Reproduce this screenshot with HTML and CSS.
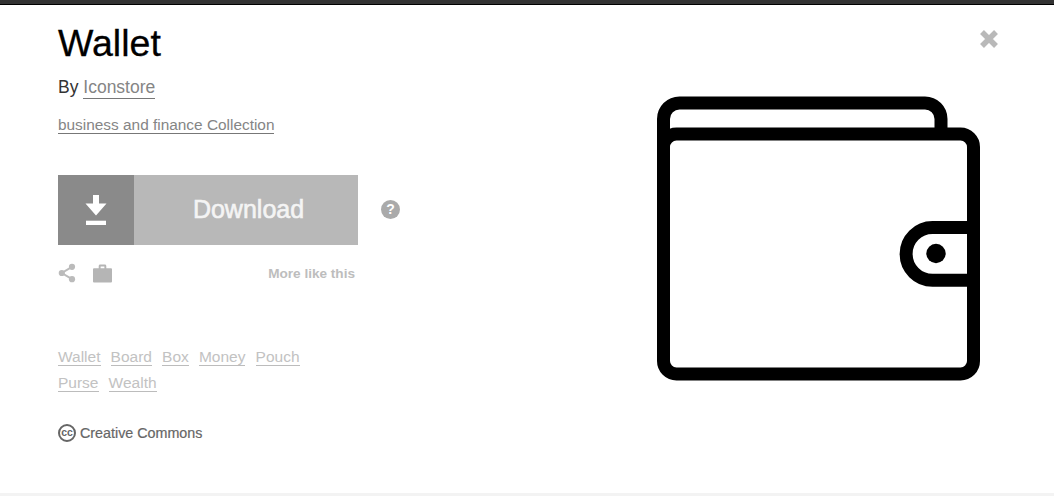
FILE: index.html
```html
<!DOCTYPE html>
<html lang="en">
<head>
  <meta charset="UTF-8" />
  <meta name="viewport" content="width=device-width, initial-scale=1.0" />
  <title>Wallet</title>
  <link rel="stylesheet" href="styles.css">
</head>
<body>
  <div class="detail">
    <a class="close" href="#" aria-label="Close">
      <svg width="20" height="20" viewBox="0 0 20 20"><path d="M3 3 17 17M17 3 3 17" /></svg>
    </a>

    <div class="info">
      <h1>Wallet</h1>
      <p class="author">By <a href="#">Iconstore</a></p>
      <p class="collection"><a href="#">business and finance Collection</a></p>

      <div class="download-row">
        <a class="download" href="#">
          <span class="download-icon">
            <svg width="22" height="31" viewBox="0 0 22 31">
              <path d="M8 0h6v8.500h7.500L11 20.500.5 8.500H8z" />
              <rect x="1" y="25.700" width="20" height="4.300" />
            </svg>
          </span>
          <span class="download-label">Download</span>
        </a>
        <span class="help">?</span>
      </div>

      <div class="actions">
        <svg class="share" width="18" height="20" viewBox="0 0 18 20">
          <circle cx="14" cy="3.800" r="3.100" />
          <circle cx="3.800" cy="10" r="3.100" />
          <circle cx="14" cy="16.200" r="3.100" />
          <path d="M14 3.800 3.800 10 14 16.200" />
        </svg>
        <svg class="case" width="19" height="19" viewBox="0 0 20 19">
          <path d="M6 4V1.500C6 .700 6.700 0 7.500 0h5c.8 0 1.500.7 1.500 1.500V4h5c.6 0 1 .4 1 1v13c0 .6-.4 1-1 1H1c-.6 0-1-.4-1-1V5c0-.6.4-1 1-1zM8 2v2h4V2z" />
        </svg>
        <a class="more" href="#">More like this</a>
      </div>

      <div class="tags">
        <a href="#">Wallet</a>
        <a href="#">Board</a>
        <a href="#">Box</a>
        <a href="#">Money</a>
        <a href="#">Pouch</a>
        <a href="#">Purse</a>
        <a href="#">Wealth</a>
      </div>

      <div class="license">
        <span class="cc">cc</span>
        <span>Creative Commons</span>
      </div>
    </div>

    <div class="preview">
      <svg width="330" height="292" viewBox="652 92 330 292">
        <path class="line" d="M663.500 150V119a16 16 0 0 1 16-16H925a16 16 0 0 1 16 16v15" />
        <rect class="line" x="663.500" y="134" width="310" height="240" rx="13" />
        <path class="line" d="M973.500 227.500H932.500a26.400 26.400 0 0 0 0 52.800H973.500" />
        <circle cx="936" cy="253.500" r="9.700" />
      </svg>
    </div>
  </div>
  <div class="page-end"></div>
</body>
</html>
```

FILE: styles.css
```css
* {
  box-sizing: border-box;
}
html, body {
  height: 100%;
}
body {
  margin: 0;
  display: flex;
  flex-direction: column;
  font-family: "Liberation Sans", Arial, sans-serif;
  background: #ffffff;
  overflow: hidden;
}
a {
  text-decoration: none;
}
.detail {
  position: relative;
  flex: 1;
  display: flex;
  justify-content: space-between;
  padding-left: 58px;
  border-top: 4px solid #333333;
  box-shadow: inset 0 1px 0 #000000;
}
.page-end {
  height: 3px;
  background: #f3f3f3;
}
.close {
  position: absolute;
  top: 25px;
  left: 978.500px;
  line-height: 0;
}
.close path {
  fill: none;
  stroke: #b9b9b9;
  stroke-width: 5.500;
}

.info {
  width: 400px;
}
h1 {
  margin: 19px 0 0;
  font-size: 37.500px;
  line-height: 40px;
  font-weight: normal;
  color: #000000;
  -webkit-text-stroke: 0.3px #000000;
}
.author {
  margin: 12px 0 0;
  font-size: 17.500px;
  line-height: 24px;
  color: #333333;
}
.author a {
  color: #858585;
  border-bottom: 1px solid #777777;
  padding-bottom: 1px;
}
.collection {
  margin: 16px 0 0;
  font-size: 15.400px;
  line-height: 20px;
}
.collection a {
  color: #858585;
  border-bottom: 1px solid #777777;
  padding-bottom: 0;
}

.download-row {
  display: flex;
  align-items: center;
  gap: 23px;
  margin-top: 40px;
}
.download {
  display: flex;
  width: 300px;
  height: 70px;
  background: #b8b8b8;
}
.download-icon {
  display: flex;
  align-items: center;
  justify-content: center;
  width: 76px;
  background: #8a8a8a;
}
.download-icon svg {
  fill: #ffffff;
}
.download-label {
  flex: 1;
  align-self: center;
  padding: 0 0 2px 5px;
  text-align: center;
  font-size: 25px;
  color: #f4f4f4;
  -webkit-text-stroke: 0.6px #f4f4f4;
}
.help {
  width: 19px;
  height: 19px;
  margin-bottom: 2px;
  border-radius: 50%;
  background: #aaaaaa;
  color: #ffffff;
  font-size: 14px;
  font-weight: bold;
  line-height: 19px;
  text-align: center;
}

.actions {
  display: flex;
  align-items: center;
  height: 20px;
  margin-top: 18px;
  width: 297px;
}
.share {
  fill: #bbbbbb;
  margin-right: 17px;
}
.share path {
  fill: none;
  stroke: #bbbbbb;
  stroke-width: 2;
}
.case {
  fill: #b5b5b5;
}
.more {
  margin-left: auto;
  padding-top: 1px;
  font-size: 13.600px;
  font-weight: bold;
  color: #bdbdbd;
}

.tags {
  width: 250px;
  margin-top: 61px;
  font-size: 15.500px;
  line-height: 26px;
}
.tags a {
  display: inline-block;
  line-height: 16px;
  margin-right: 5.800px;
  color: #c2c2c2;
  border-bottom: 1px solid #bcbcbc;
}

.license {
  display: flex;
  align-items: center;
  gap: 4px;
  margin-top: 28px;
  font-size: 14.300px;
  color: #666666;
  -webkit-text-stroke: 0.2px #666666;
}
.cc {
  width: 18px;
  height: 18px;
  border: 2px solid #666666;
  border-radius: 50%;
  font-size: 10.500px;
  font-weight: bold;
  line-height: 13px;
  text-align: center;
  -webkit-text-stroke: 0;
}

.preview {
  margin: 88px 72px 0 0;
}
.preview svg {
  display: block;
}
.preview .line {
  fill: none;
  stroke: #000000;
  stroke-width: 13;
}
```
